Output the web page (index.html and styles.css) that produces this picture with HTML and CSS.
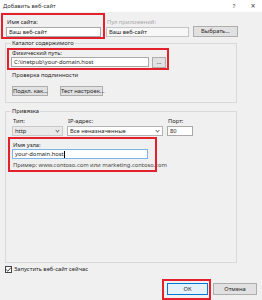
FILE: index.html
```html
<!DOCTYPE html>
<html lang="ru">
<head>
<meta charset="utf-8">
<title>Добавить веб-сайт</title>
<link rel="stylesheet" href="styles.css">
</head>
<body>
<div class="titlebar">
  <span class="title">Добавить веб-сайт</span>
  <span class="tb-btns"><span class="help">?</span><span class="close">×</span></span>
</div>
<div class="main">
  <div class="row1">
    <div class="col-site">
      <div class="lbl">Имя сайта:</div>
      <div class="input">Ваш веб-сайт</div>
    </div>
    <div class="col-pool">
      <div class="lbl disabled">Пул приложений:</div>
      <div class="input ro">Ваш веб-сайт</div>
    </div>
    <div class="btn btn-select">Выбрать...</div>
  </div>

  <div class="group g1">
    <div class="legend">Каталог содержимого</div>
    <div class="lbl l-phys">Физический путь:</div>
    <div class="path-row">
      <div class="input path">C:\inetpub\your-domain.host</div>
      <div class="btn btn-dots">...</div>
    </div>
    <div class="lbl l-auth">Проверка подлинности</div>
    <div class="auth-row">
      <div class="btn btn-conn">Подкл. как...</div>
      <div class="btn btn-test">Тест настроек...</div>
    </div>
  </div>

  <div class="group g2">
    <div class="legend">Привязка</div>
    <div class="bind-row">
      <div class="col-type">
        <div class="lbl">Тип:</div>
        <div class="select"><span>http</span><span class="chev"></span></div>
      </div>
      <div class="col-ip">
        <div class="lbl">IP-адрес:</div>
        <div class="select"><span>Все неназначенные</span><span class="chev"></span></div>
      </div>
      <div class="col-port">
        <div class="lbl">Порт:</div>
        <div class="input">80</div>
      </div>
    </div>
    <div class="lbl l-host">Имя узла:</div>
    <div class="input host">your-domain.host<span class="caret"></span></div>
    <div class="hint">Пример: www.contoso.com или marketing.contoso.com</div>
  </div>

  <div class="check-row">
    <span class="checkbox"><svg width="7" height="7" viewBox="0 0 7 7"><path d="M1.2 3.6 L2.8 5.2 L5.9 1.6" fill="none" stroke="#222" stroke-width="0.9"/></svg></span>
    <span class="check-lbl">Запустить веб-сайт сейчас</span>
  </div>

  <div class="footer">
    <div class="btn btn-ok">ОК</div>
    <div class="btn btn-cancel">Отмена</div>
  </div>

  <div class="mark m1"></div>
  <div class="mark m2"></div>
  <div class="mark m3"></div>
  <div class="mark m4"></div>
</div>
</body>
</html>
```

FILE: styles.css
```css
* { box-sizing: border-box; }
html, body { margin: 0; padding: 0; }
body {
  width: 262px;
  height: 300px;
  background: #f0f0f0;
  font-family: "Noto Sans", "Open Sans", sans-serif;
  font-size: 5.8px;
  line-height: 8px;
  color: #262626;
  overflow: hidden;
}
.titlebar {
  height: 12px;
  background: #ffffff;
  display: flex;
  align-items: center;
  justify-content: space-between;
  padding: 0 0 0 3px;
  color: #333;
}
.tb-btns { display: flex; align-items: center; }
.help { width: 10px; margin-right: 9px; text-align: center; font-size: 6px; }
.close { width: 10px; margin-right: 4px; text-align: center; font-size: 8px; color: #444; }

.main { position: relative; height: 288px; padding-top: 6px; }

.lbl { padding-left: 1px; white-space: nowrap; }
.disabled { color: #a8a8a8; }

.input {
  height: 10px;
  margin-top: 1px;
  background: #fff;
  border: 1px solid #a9a9a9;
  padding: 0 2px;
  line-height: 8px;
  white-space: nowrap;
  overflow: hidden;
}
.input.ro { border-color: #c4c4c4; background: #f7f7f7; }

.btn {
  height: 11px;
  background: #e1e1e1;
  border: 1px solid #adadad;
  text-align: center;
  line-height: 9px;
  white-space: nowrap;
}

.row1 { display: flex; align-items: flex-end; }
.col-site { width: 95px; margin-left: 6px; }
.col-pool { width: 83px; margin-left: 5px; }
.btn-select { width: 45px; margin-left: 4px; }

.group {
  border: 1px solid #d9d9d9;
  margin: 0 25px 0 5px;
  padding-left: 5px;
}
.legend {
  width: fit-content;
  margin: -5px 0 0 0;
  padding: 0 1px;
  background: #f0f0f0;
  white-space: nowrap;
}
.g1 { margin-top: 6px; padding-bottom: 6px; }
.l-phys { margin-top: 2px; }
.path-row { display: flex; align-items: flex-start; }
.input.path { width: 138px; margin-top: 0; }
.btn-dots { width: 14px; margin-left: 3px; line-height: 8px; }
.l-auth { margin-top: 3px; }
.auth-row { display: flex; margin-top: 7px; padding-left: 1px; }
.btn-conn { width: 36px; height: 10px; line-height: 8px; }
.btn-test { width: 43px; height: 10px; line-height: 8px; margin-left: 12px; }

.g2 { margin-top: 8px; padding-bottom: 93px; }
.bind-row { display: flex; margin-top: 2px; padding-left: 1px; }
.col-type { width: 51px; }
.col-ip { width: 96px; margin-left: 4px; }
.col-port { width: 26px; margin-left: 4px; }
.select {
  height: 10px;
  margin-top: 1px;
  border: 1px solid #b4b4b4;
  background: #ffffff;
  display: flex;
  align-items: center;
  justify-content: space-between;
  padding: 0 2px;
  white-space: nowrap;
}
.col-type .select { background: #e9e9e9; border-color: #c8c8c8; }
.chev {
  width: 3px; height: 3px;
  border-right: 1px solid #777;
  border-bottom: 1px solid #777;
  transform: rotate(45deg);
  margin: -2px 1px 0 0;
}
.l-host { margin-top: 5px; padding-left: 2px; }
.input.host {
  width: 136px;
  margin-top: 0;
  margin-left: 1px;
  border-color: #7ab4ea;
  display: flex;
  align-items: center;
}
.caret { display: inline-block; width: 1px; height: 7px; background: #000; margin-left: 0.5px; }
.hint { margin-top: 2px; padding-left: 2px; color: #444; white-space: nowrap; }

.check-row { display: flex; align-items: center; margin-top: 2px; margin-left: 5px; height: 8px; }
.checkbox {
  width: 7px; height: 7px;
  border: 1px solid #444;
  background: #fff;
  display: flex;
}
.checkbox svg { margin: -1px; }
.check-lbl { margin-left: 2px; }

.footer { display: flex; justify-content: flex-end; margin-top: 10px; margin-right: 5px; }
.btn-ok { width: 41px; height: 12px; line-height: 10px; border: 1px solid #0078d7; background: #e5f1fb; }
.btn-cancel { width: 44px; height: 12px; line-height: 10px; margin-left: 5px; }

.mark { position: absolute; border: 2px solid #e3202c; }
.m1 { left: 1px; top: 1px; width: 104px; height: 26px; }
.m2 { left: 7px; top: 36px; width: 162px; height: 22px; }
.m3 { left: 8px; top: 125px; width: 149px; height: 35px; }
.m4 { left: 162px; top: 267px; width: 49px; height: 21px; }
```
